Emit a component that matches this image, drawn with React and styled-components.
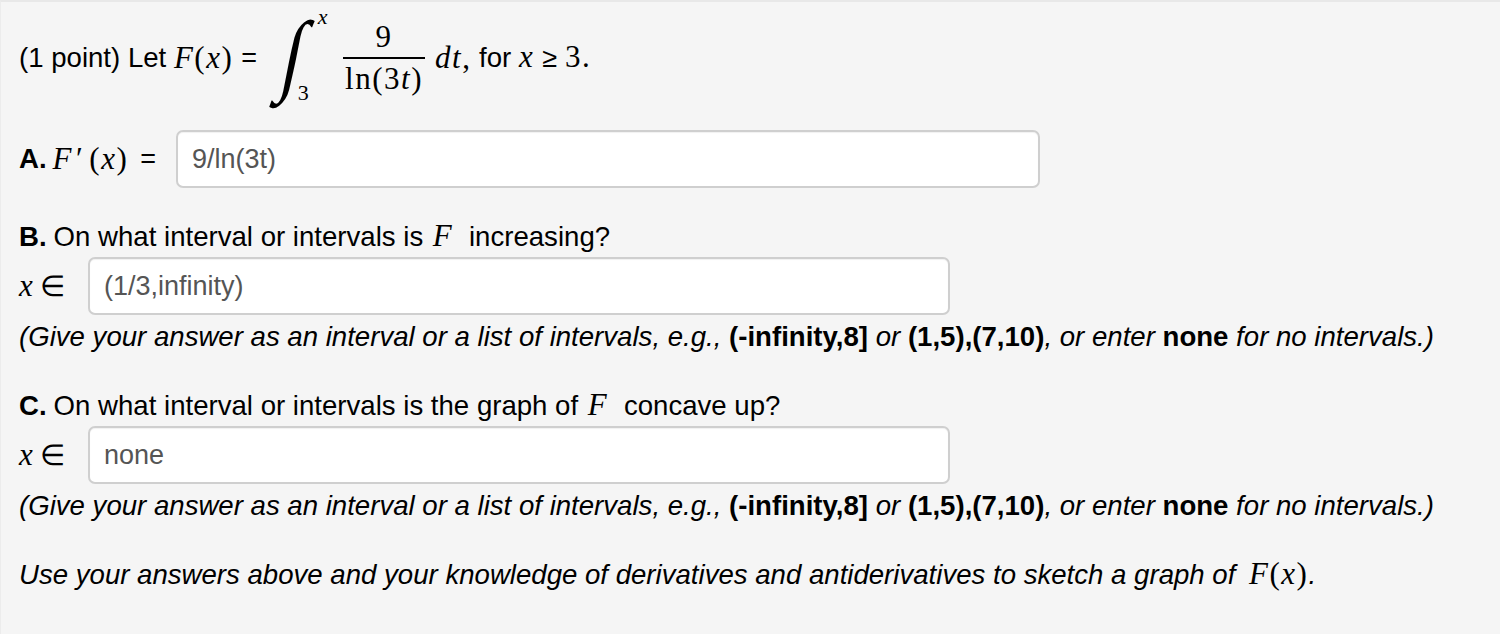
import React from 'react'
import styled, { createGlobalStyle } from 'styled-components'

const GlobalStyle = createGlobalStyle`
  html, body {
    margin: 0;
    padding: 0;
    background: #f5f5f5;
  }
  body {
    font-family: "Liberation Sans", Arial, sans-serif;
    color: #000;
  }
`

const Problem = styled.div`
  box-sizing: border-box;
  width: 1500px;
  height: 634px;
  padding: 8px 0 0 18px;
  border-top: 2px solid #e8e8e8;
  border-left: 1px solid #ececec;
  font-size: 27.6px;
  line-height: 30px;
`

const IntroLine = styled.div`
  display: flex;
  align-items: center;
  height: 95px;
`

const Row = styled.div`
  display: flex;
  align-items: center;
  margin-top: ${(p) => p.$top || 0}px;
`

const Para = styled.p`
  margin: ${(p) => p.$top || 0}px 0 0 0;
  font-style: ${(p) => (p.$italic ? 'italic' : 'normal')};
  white-space: nowrap;
`

const Strong = styled.b`
  font-weight: 700;
  font-style: normal;
`

const Label = styled.b`
  font-weight: 700;
  margin-right: ${(p) => p.$gap ?? 7}px;
`

const Math = styled.span`
  font-family: "Liberation Serif", "Times New Roman", serif;
  font-style: normal;
  font-size: 31px;
  letter-spacing: 1.5px;
  white-space: nowrap;
  margin-left: ${(p) => p.$before || 0}px;
`

const V = styled.i`
  font-family: "Liberation Serif", "Times New Roman", serif;
  font-style: italic;
  margin-right: ${(p) => p.$after || 0}px;
`

const Prime = styled.span`
  margin: 0 5px 0 3px;
`

const Rel = styled.span`
  font-family: "Liberation Sans", Arial, sans-serif;
  font-size: 27px;
  letter-spacing: 0;
  margin: 0 ${(p) => p.$right ?? p.$gap ?? 10}px 0 ${(p) => p.$gap ?? 10}px;
`

const Integral = styled.span`
  display: inline-flex;
  align-items: center;
  margin: 0 2px 0 0;
`

const IntSign = styled.span`
  font-family: "Liberation Serif", serif;
  font-size: 74px;
  line-height: 1;
  display: inline-block;
  transform: scaleY(1.22) skewX(-14deg);
  margin-top: -10px;
`

const Limits = styled.span`
  display: inline-flex;
  flex-direction: column;
  justify-content: space-between;
  height: 88px;
  font-size: 22px;
  line-height: 22px;
  margin-left: 2px;
`

const Upper = styled(V)`
  margin-left: 10px;
  margin-top: -8px;
`

const Lower = styled.span`
  margin-left: -10px;
  margin-bottom: -2px;
`

const Frac = styled.span`
  display: inline-flex;
  flex-direction: column;
  align-items: center;
  margin: 0 10px 0 12px;
  font-size: 31px;
  line-height: 32px;
`

const Num = styled.span`
  padding: 0 4px 4px;
`

const Den = styled.span`
  border-top: 2px solid #000;
  padding: 4px 2px 0;
`

const Field = styled.input`
  box-sizing: border-box;
  width: ${(p) => p.$w}px;
  height: 58px;
  border: 2px solid #cfcfcf;
  border-radius: 7px;
  background: #fff;
  box-shadow: inset 0 1px 1px rgba(0, 0, 0, 0.06);
  padding: 0 14px;
  font-family: "Liberation Sans", Arial, sans-serif;
  font-size: 27px;
  color: #555;
  outline: none;
`

const Member = styled.span`
  display: inline-flex;
  align-items: center;
  width: 69px;
  font-family: "Liberation Serif", "Times New Roman", serif;
  font-size: 31px;
`

const ElementOf = styled.span`
  margin-left: 7px;
  font-size: 29px;
`

const Hint = ({ top }) => (
  <Para $italic $top={top}>
    (Give your answer as an interval or a list of intervals, e.g., <Strong>(-infinity,8]</Strong> or{' '}
    <Strong>(1,5),(7,10)</Strong>, or enter <Strong>none</Strong> for no intervals.)
  </Para>
)

const App = () => (
  <>
    <GlobalStyle />
    <Problem>
      <IntroLine>
        <span>(1 point) Let&nbsp;</span>
        <Math>
          <V>F</V>(<V>x</V>)
        </Math>
        <Rel $gap={8} $right={27}>=</Rel>
        <Math>
          <Integral>
            <IntSign>∫</IntSign>
            <Limits>
              <Upper>x</Upper>
              <Lower>3</Lower>
            </Limits>
          </Integral>
        </Math>
        <Math>
          <Frac>
            <Num>9</Num>
            <Den>
              ln(3<V>t</V>)
            </Den>
          </Frac>
        </Math>
        <Math>
          <V>dt</V>,
        </Math>
        <span>&nbsp;for&nbsp;</span>
        <Math>
          <V>x</V>
          <Rel $gap={8}>≥</Rel>3.
        </Math>
      </IntroLine>

      <Row $top={25}>
        <Label $gap={6}>A.</Label>
        <Math>
          <V>F</V>
          <Prime>′</Prime>(<V>x</V>)
        </Math>
        <Rel $gap={12} $right={20}>=</Rel>
        <Field $w={864} defaultValue="9/ln(3t)" readOnly />
      </Row>

      <Para $top={33}>
        <Label>B.</Label>On what interval or intervals is{' '}
        <Math $before={2}>
          <V $after={8}>F</V>
        </Math>{' '}
        increasing?
      </Para>
      <Row $top={5}>
        <Member>
          <V>x</V>
          <ElementOf>∈</ElementOf>
        </Member>
        <Field $w={862} defaultValue="(1/3,infinity)" readOnly />
      </Row>
      <Hint top={7} />

      <Para $top={38}>
        <Label>C.</Label>On what interval or intervals is the graph of{' '}
        <Math $before={2}>
          <V $after={8}>F</V>
        </Math>{' '}
        concave up?
      </Para>
      <Row $top={5}>
        <Member>
          <V>x</V>
          <ElementOf>∈</ElementOf>
        </Member>
        <Field $w={862} defaultValue="none" readOnly />
      </Row>
      <Hint top={7} />

      <Para $italic $top={38}>
        Use your answers above and your knowledge of derivatives and antiderivatives to sketch a graph of{' '}
        <Math $before={6}>
          <V>F</V>(<V>x</V>)
        </Math>
        .
      </Para>
    </Problem>
  </>
)

export default App
